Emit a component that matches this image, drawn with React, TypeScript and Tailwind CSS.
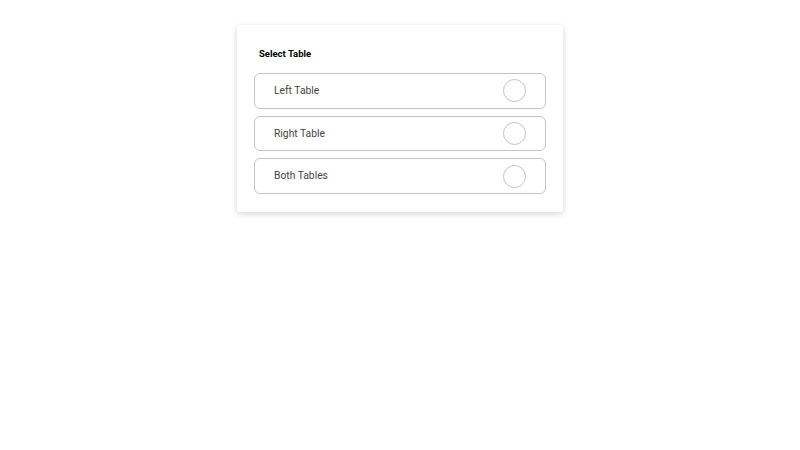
import React from "react";

const options = ["Left Table", "Right Table", "Both Tables"];

export default function App() {
  return (
    <div
      className="w-[800px] h-[450px] bg-white flex justify-center pt-[25px]"
      style={{ fontFamily: "Roboto, 'Liberation Sans', sans-serif" }}
    >
      <div className="w-[326px] h-[187px] bg-white rounded-[3px] shadow-[0_2px_6px_rgba(0,0,0,0.16)] px-[17px] pt-[22px] pb-[19px] flex flex-col">
        <div className="pl-[5px] h-[14px] leading-[14px] text-[9.5px] font-bold text-black mb-[12px]">
          Select Table
        </div>
        <div className="flex flex-col gap-[7.2px]">
          {options.map((o) => (
            <div
              key={o}
              className="h-[35.5px] border border-[#c4c4c4] rounded-[6px] flex items-center justify-between pl-[19px] pr-[19px]"
            >
              <span className="text-[10.3px] text-[#444]">{o}</span>
              <span className="w-[23px] h-[23px] rounded-full border border-[#c2c2c2]" />
            </div>
          ))}
        </div>
      </div>
    </div>
  );
}
